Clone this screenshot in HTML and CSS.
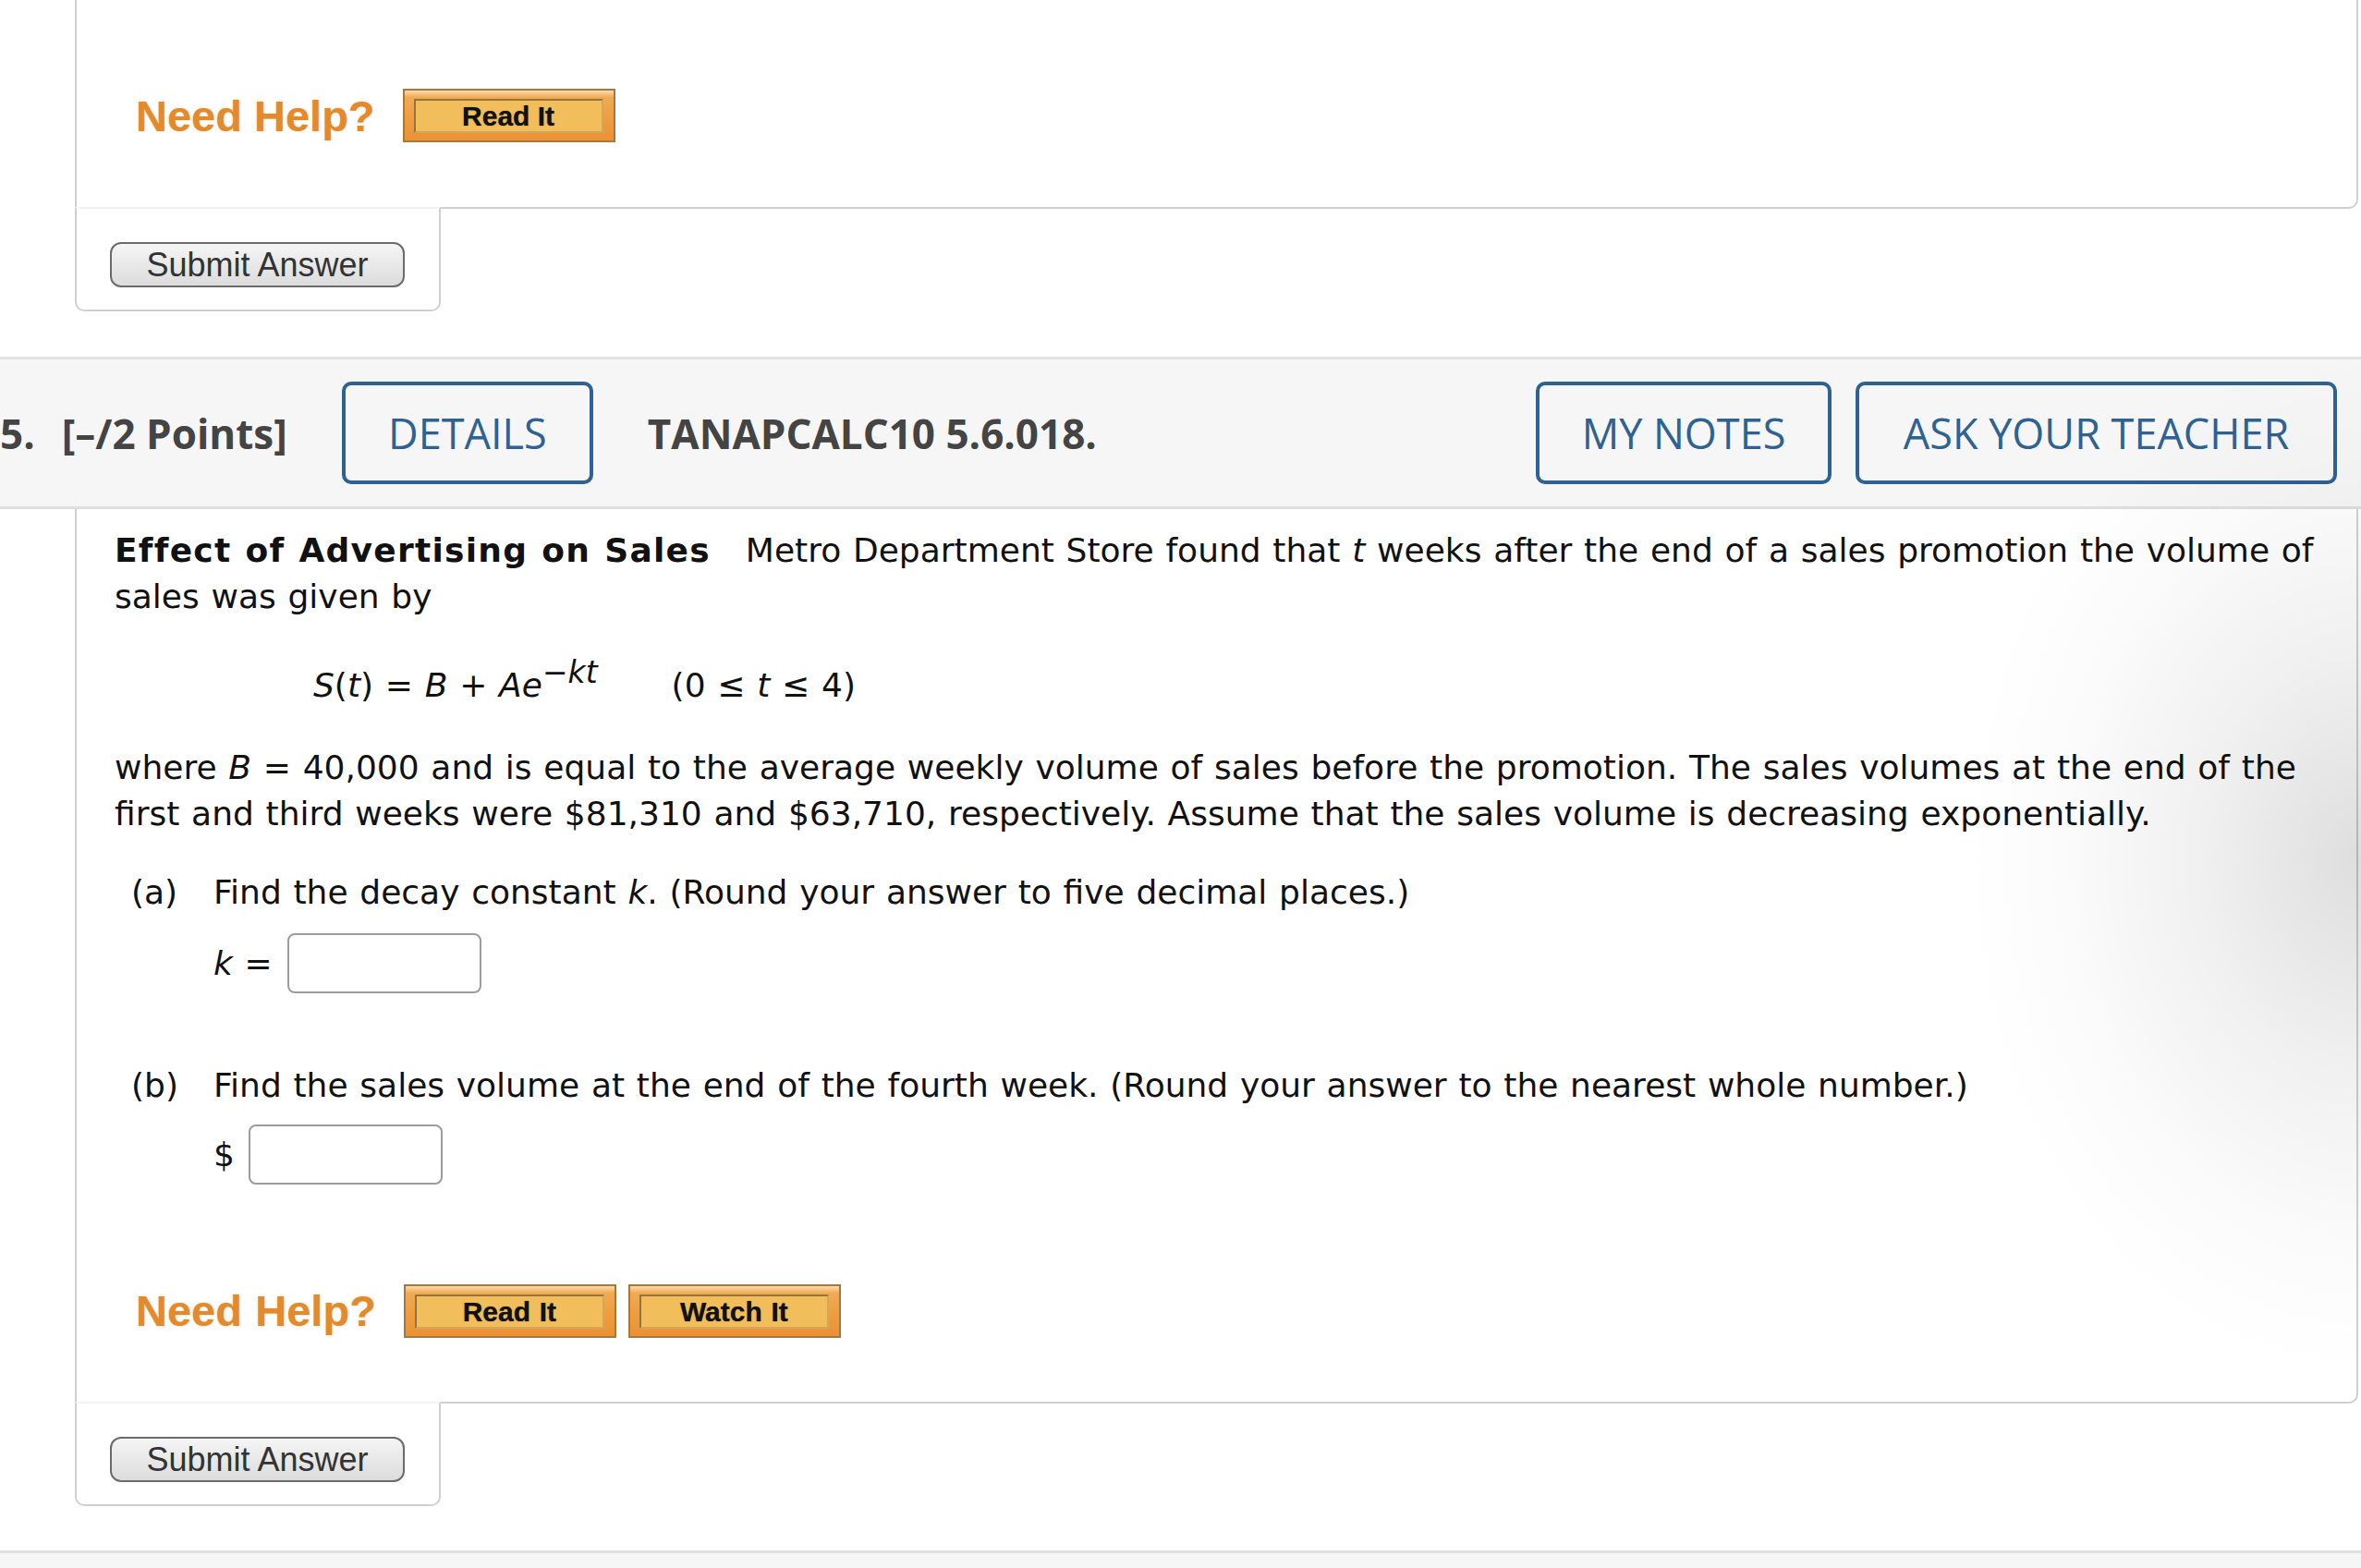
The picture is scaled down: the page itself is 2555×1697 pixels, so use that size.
FILE: index.html
```html
<!DOCTYPE html>
<html lang="en">
<head>
<meta charset="utf-8">
<title>Question 5</title>
<link rel="stylesheet" href="styles.css">
</head>
<body>
<div class="page">
  <section class="qpanel">
    <div class="panel-body top-body">
      <div class="help-row">
        <span class="need-help">Need Help?</span>
        <a class="help-btn"><span>Read It</span></a>
      </div>
    </div>
    <div class="submit-tab"><button class="submit">Submit Answer</button></div>
  </section>

  <header class="qhead">
    <span class="qnum">5.</span>
    <span class="qpts">[–/2 Points]</span>
    <button class="btn-outline btn-details">DETAILS</button>
    <span class="qcode">TANAPCALC10 5.6.018.</span>
    <span class="spacer"></span>
    <button class="btn-outline btn-notes">MY NOTES</button>
    <button class="btn-outline btn-ask">ASK YOUR TEACHER</button>
  </header>

  <section class="qpanel">
    <div class="panel-body main-body">
      <p class="intro"><b class="title">Effect of Advertising on Sales</b><span class="sep"></span>Metro Department Store found that <i>t</i> weeks after the end of a sales promotion the volume of sales was given by</p>
      <p class="formula"><i>S</i>(<i>t</i>) = <i>B</i> + <i>Ae</i><sup>−<i>kt</i></sup><span class="dom">(0 ≤ <i>t</i> ≤ 4)</span></p>
      <p class="where">where <i>B</i> = 40,000 and is equal to the average weekly volume of sales before the promotion. The sales volumes at the end of the first and third weeks were $81,310 and $63,710, respectively. Assume that the sales volume is decreasing exponentially.</p>

      <div class="part part-a">
        <span class="part-label">(a)</span>
        <span class="part-text">Find the decay constant <i>k</i>. (Round your answer to five decimal places.)</span>
      </div>
      <div class="answer-row row-a">
        <span class="ans-label"><i>k</i> =</span>
        <span class="answer"></span>
      </div>

      <div class="part part-b">
        <span class="part-label">(b)</span>
        <span class="part-text">Find the sales volume at the end of the fourth week. (Round your answer to the nearest whole number.)</span>
      </div>
      <div class="answer-row row-b">
        <span class="ans-label">$</span>
        <span class="answer"></span>
      </div>

      <div class="help-row help-main">
        <span class="need-help">Need Help?</span>
        <a class="help-btn"><span>Read It</span></a>
        <a class="help-btn"><span>Watch It</span></a>
      </div>
    </div>
    <div class="submit-tab"><button class="submit">Submit Answer</button></div>
  </section>

  <div class="next-head"></div>
  <div class="shade"></div>
</div>
</body>
</html>
```
FILE: styles.css
```css
* { box-sizing: border-box; }

html, body {
  margin: 0;
  padding: 0;
  background: #ffffff;
}

body {
  font-family: "DejaVu Sans", Verdana, sans-serif;
  color: #111111;
}

.page {
  position: relative;
  width: 2555px;
  height: 1697px;
  overflow: hidden;
}

/* ---------- question panels ---------- */
.qpanel {
  margin-left: 81px;
  margin-right: 3px;
}

.panel-body {
  background: #ffffff;
  border-left: 2px solid #d0d0d0;
  border-right: 2px solid #d0d0d0;
  border-bottom: 2px solid #d0d0d0;
  border-bottom-right-radius: 10px;
}

.top-body {
  padding: 96px 40px 70px 41px;
}

.submit-tab {
  position: relative;
  z-index: 1;
  width: 396px;
  height: 113px;
  margin-top: -2px;
  background: #ffffff;
  border-top: 2px solid #f3f3f3;
  border-left: 2px solid #d0d0d0;
  border-right: 2px solid #d0d0d0;
  border-bottom: 2px solid #d0d0d0;
  border-radius: 0 0 10px 10px;
  padding: 36px 0 0 36px;
}

.submit {
  display: block;
  width: 319px;
  height: 49px;
  padding: 0;
  border: 2px solid #6b6b6b;
  border-radius: 12px;
  background: linear-gradient(#f5f5f5, #dcdcdc);
  font-family: "Liberation Sans", Arial, sans-serif;
  font-size: 36px;
  line-height: 44px;
  color: #333333;
  text-align: center;
}

/* ---------- help row ---------- */
.help-row {
  display: flex;
  align-items: center;
  height: 58px;
  padding-left: 23px;
}

.need-help {
  font-family: "Liberation Sans", Arial, sans-serif;
  font-weight: bold;
  font-size: 47px;
  color: #e38a2d;
  margin-right: 30px;
  text-shadow: 0 0 2px rgba(227, 138, 45, 0.45);
}

.help-btn {
  display: block;
  width: 230px;
  height: 58px;
  margin-right: 13px;
  padding: 9px 11px 8px 10px;
  border: 2px solid #a8773c;
  background: linear-gradient(#fbdcab 0, #f1aa52 14%, #ee9c3e 60%, #ea9235 100%);
}

.help-btn span {
  display: flex;
  height: 100%;
  align-items: center;
  justify-content: center;
  background: #f2be5b;
  border: 2px solid;
  border-color: #93733f #d6a55c #d6a55c #93733f;
  font-family: "Liberation Sans", Arial, sans-serif;
  font-weight: bold;
  font-size: 30px;
  color: #111111;
  text-shadow: 0 0 1px rgba(0, 0, 0, 0.6);
}

/* ---------- header ---------- */
.qhead {
  display: flex;
  align-items: center;
  height: 165px;
  margin-top: 49px;
  padding-right: 26px;
  background: #f6f6f6;
  border-top: 3px solid #e3e3e3;
  border-bottom: 3px solid #dedede;
  font-family: "Open Sans", "DejaVu Sans", sans-serif;
  font-size: 44px;
}

.qnum,
.qpts,
.qcode {
  font-weight: 700;
  color: #444444;
}

.qpts {
  margin-left: 29px;
}

.btn-outline {
  height: 111px;
  padding: 0;
  background: transparent;
  border: 4px solid #2e6292;
  border-radius: 10px;
  color: #2e6292;
  font-family: "Open Sans", "DejaVu Sans", sans-serif;
  font-size: 45px;
  font-weight: 400;
  text-align: center;
}

.btn-details {
  width: 272px;
  margin-left: 59px;
}

.qcode {
  margin-left: 59px;
}

.spacer {
  flex: 1;
}

.btn-notes {
  width: 320px;
}

.btn-ask {
  width: 521px;
  margin-left: 26px;
}

/* ---------- main body ---------- */
.main-body {
  padding: 20px 20px 69px 41px;
  font-size: 36px;
  line-height: 50px;
  word-spacing: 1.3px;
}

.main-body p {
  margin: 0;
}

.title {
  font-weight: bold;
  letter-spacing: 1.25px;
}

.sep {
  display: inline-block;
  width: 38px;
}

.formula {
  margin-top: 46px !important;
  padding-left: 215px;
}

.formula sup {
  font-size: 33px;
  line-height: 0;
  vertical-align: 15px;
}

.dom {
  margin-left: 80px;
}

.where {
  margin-top: 39px !important;
}

.part {
  display: flex;
  padding-left: 18px;
}

.part-label {
  width: 89px;
  flex: none;
}

.part-a {
  margin-top: 35px;
}

.part-b {
  margin-top: 75px;
}

.answer-row {
  display: flex;
  align-items: center;
  padding-left: 107px;
  height: 65px;
}

.row-a {
  margin-top: 19px;
}

.row-b {
  margin-top: 17px;
}

.ans-label {
  margin-right: 16px;
}

.row-b .ans-label {
  margin-right: 15px;
}

.answer {
  display: block;
  width: 210px;
  height: 65px;
  border: 2px solid #9c9c9c;
  border-radius: 8px;
  background: #ffffff;
}

.help-main {
  margin-top: 108px;
}

/* ---------- next question header ---------- */
.next-head {
  height: 40px;
  margin-top: 48px;
  background: #f6f6f6;
  border-top: 3px solid #e0e0e0;
}

/* ---------- right-edge shading ---------- */
.shade {
  position: absolute;
  left: 0;
  top: 0;
  width: 100%;
  height: 100%;
  pointer-events: none;
  background: radial-gradient(ellipse 430px 560px at 100% 930px,
      rgba(0, 0, 0, 0.13) 0%,
      rgba(0, 0, 0, 0.06) 40%,
      rgba(0, 0, 0, 0.015) 75%,
      rgba(0, 0, 0, 0) 100%);
}
```
